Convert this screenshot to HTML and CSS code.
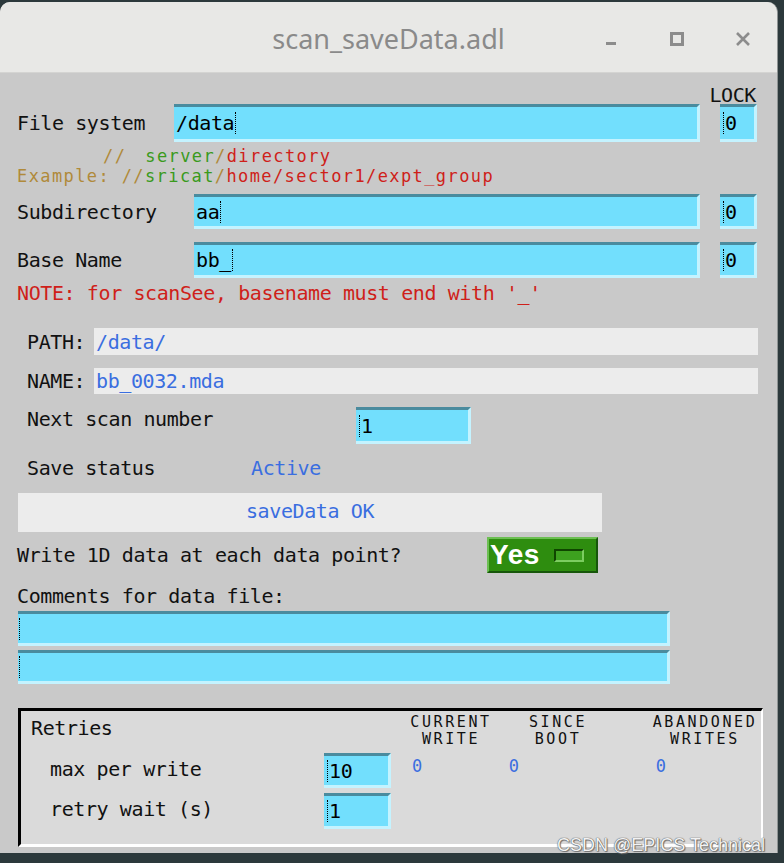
FILE: index.html
```html
<!DOCTYPE html>
<html>
<head>
    <meta name="viewport" content="width=device-width, initial-scale=1.0">
    <title>scan_saveData.adl</title>
    <link rel="stylesheet" href="styles.css">
</head>
<body>
    <div class="window">
        <div class="titlebar">
            <div></div>
            <div class="title">scan_saveData.adl</div>
            <div class="win-buttons">
                <svg width="14" height="16" viewBox="0 0 14 16"><rect x="1" y="11" width="10" height="3" fill="#8c8c8c"/></svg>
                <svg width="16" height="16" viewBox="0 0 16 16"><rect x="2.5" y="2.5" width="11" height="11" fill="none" stroke="#8c8c8c" stroke-width="3"/></svg>
                <svg width="16" height="16" viewBox="0 0 16 16"><path d="M2 2 L14 14 M14 2 L2 14" stroke="#8c8c8c" stroke-width="2.6"/></svg>
            </div>
        </div>

        <div class="content">
            <div class="lock-row"><span>LOCK</span></div>

            <div class="row row-fs">
                <div class="label lbl-fs">File system</div>
                <div class="field wide">/data<span class="cursor"></span></div>
                <div class="field lock"><span class="cursor"></span>0</div>
            </div>

            <div class="example">
                <div><span class="pad1"></span><span class="brown">//</span><span class="pad2"></span><span class="green">server</span><span class="brown">/</span><span class="red">directory</span></div>
                <div><span class="brown">Example: //</span><span class="green">sricat</span><span class="brown">/</span><span class="red">home/sector1/expt_group</span></div>
            </div>

            <div class="row row-sub">
                <div class="label lbl-sub">Subdirectory</div>
                <div class="field wide">aa<span class="cursor"></span></div>
                <div class="field lock"><span class="cursor"></span>0</div>
            </div>

            <div class="row row-base">
                <div class="label lbl-sub">Base Name</div>
                <div class="field wide">bb_<span class="cursor"></span></div>
                <div class="field lock"><span class="cursor"></span>0</div>
            </div>

            <div class="note">NOTE: for scanSee, basename must end with '_'</div>

            <div class="row row-path">
                <div class="label lbl-path">PATH:</div>
                <div class="readout">/data/</div>
            </div>

            <div class="row row-name">
                <div class="label lbl-path">NAME:</div>
                <div class="readout">bb_0032.mda</div>
            </div>

            <div class="row row-next">
                <div class="label lbl-next">Next scan number</div>
                <div class="field small"><span class="cursor"></span>1</div>
            </div>

            <div class="row row-status">
                <div class="label lbl-status">Save status</div>
                <div class="blue">Active</div>
            </div>

            <div class="message">saveData OK</div>

            <div class="row row-write">
                <div class="label lbl-write">Write 1D data at each data point?</div>
                <div class="yes-btn"><span>Yes</span><i class="indicator"></i></div>
            </div>

            <div class="comments-label">Comments for data file:</div>
            <div class="field comment"><span class="cursor"></span></div>
            <div class="field comment second"><span class="cursor"></span></div>

            <div class="retries">
                <div class="retries-head">
                    <div class="retries-title">Retries</div>
                    <div class="col-head h-current">CURRENT<br>WRITE</div>
                    <div class="col-head h-since">SINCE<br>BOOT</div>
                    <div class="col-head h-aband">ABANDONED<br>WRITES</div>
                </div>
                <div class="retry-row">
                    <div class="retry-label">max per write</div>
                    <div class="field retry-field"><span class="cursor"></span>10</div>
                    <div class="count c1">0</div>
                    <div class="count c2">0</div>
                    <div class="count c3">0</div>
                </div>
                <div class="retry-row second">
                    <div class="retry-label">retry wait (s)</div>
                    <div class="field retry-field"><span class="cursor"></span>1</div>
                </div>
            </div>
        </div>
    </div>
    <div class="watermark">CSDN @EPICS Technical</div>
</body>
</html>
```

FILE: styles.css
```css
body {
    margin: 0;
    width: 784px;
    height: 863px;
    overflow: hidden;
    background: #2c393c;
    font-family: 'DejaVu Sans Mono', 'Liberation Mono', monospace;
    font-size: 20px;
    letter-spacing: -0.4px;
    color: #111;
    position: relative;
}
.window {
    width: 777px;
    margin-top: 2px;
    background: #c9c9c9;
    border-radius: 10px 10px 0 0;
    border-right: 1px solid #8f9494;
}
.titlebar {
    height: 70px;
    background: #e8e8e6;
    border-radius: 10px 10px 0 0;
    border-bottom: 1px solid #d4d4d2;
    display: grid;
    grid-template-columns: 1fr auto 1fr;
    align-items: center;
}
.title {
    font-family: 'Noto Sans', 'DejaVu Sans', sans-serif;
    font-size: 27px;
    letter-spacing: 0;
    color: #8a8a8a;
    padding-top: 2px;
}
.win-buttons {
    display: flex;
    justify-content: flex-end;
    align-items: center;
    gap: 50px;
    padding-right: 26px;
    padding-top: 4px;
}
.content {
    padding: 0 0 6px 17px;
}
.lock-row {
    height: 31px;
    display: flex;
    justify-content: flex-end;
    align-items: flex-end;
    padding-right: 21px;
    line-height: 18px;
}
.row {
    display: flex;
    align-items: center;
}
.label {
    flex-shrink: 0;
}
.field {
    box-sizing: border-box;
    background: #72dffd;
    border-top: 3px solid #4a8b9e;
    border-bottom: 3px solid #c4f3ff;
    border-right: 3px solid #c4f3ff;
    display: flex;
    align-items: center;
    padding-left: 2px;
    color: #000;
}
.cursor {
    display: inline-block;
    width: 0;
    height: 22px;
    border-left: 1px dotted #000;
    margin: 0 1px;
}
.row-fs { height: 38px; }
.row-fs .field, .row-sub .field, .row-base .field { height: 100%; }
.lbl-fs { width: 157px; }
.lbl-sub { width: 177px; }
.wide { flex: 1; }
.lock {
    width: 37px;
    margin-left: 20px;
    margin-right: 20px;
    flex-shrink: 0;
}
.example {
    margin-top: 4px;
    font-size: 17px;
    letter-spacing: 1.4px;
    line-height: 20px;
}
.pad1 { display: inline-block; width: 86px; }
.pad2 { display: inline-block; width: 19px; }
.brown { color: #b08a3a; }
.green { color: #3a9a1c; }
.red { color: #cf1f1a; }
.blue { color: #3a6ee0; }
.row-sub { height: 35px; margin-top: 8px; }
.row-base { height: 36px; margin-top: 13px; }
.note {
    color: #cf1f1a;
    margin-top: 5px;
    line-height: 20px;
}
.row-path { height: 27px; margin-top: 25px; }
.row-name { height: 26px; margin-top: 13px; }
.lbl-path { width: 67px; padding-left: 10px; }
.readout {
    width: 664px;
    height: 100%;
    background: #ececec;
    color: #3a6ee0;
    display: flex;
    align-items: center;
    padding-left: 2px;
    box-sizing: border-box;
}
.row-next { height: 37px; margin-top: 13px; }
.lbl-next {
    width: 329px;
    padding-left: 10px;
    align-self: flex-start;
    line-height: 24px;
}
.small { width: 115px; height: 100%; }
.row-status { height: 28px; margin-top: 10px; }
.lbl-status { width: 224px; padding-left: 10px; }
.message {
    margin: 11px 0 0 1px;
    width: 584px;
    height: 39px;
    background: #ececec;
    color: #3a6ee0;
    display: flex;
    align-items: center;
    justify-content: center;
    padding-bottom: 3px;
    box-sizing: border-box;
}
.row-write { height: 36px; margin-top: 5px; }
.lbl-write { width: 470px; }
.yes-btn {
    box-sizing: border-box;
    width: 111px;
    height: 36px;
    background: #2e8d0f;
    border-top: 2px solid #6cbf52;
    border-left: 2px solid #6cbf52;
    border-bottom: 2px solid #17560a;
    border-right: 2px solid #17560a;
    display: flex;
    align-items: center;
}
.yes-btn span {
    font-family: 'Liberation Sans', Arial, sans-serif;
    font-weight: bold;
    font-size: 28px;
    letter-spacing: 0.5px;
    color: #fff;
    margin-left: 1px;
}
.indicator {
    box-sizing: border-box;
    width: 30px;
    height: 13px;
    margin-left: 14px;
    background: #3da11f;
    border-top: 2px solid #0f4500;
    border-left: 2px solid #0f4500;
    border-bottom: 2px solid #7ccd60;
    border-right: 2px solid #7ccd60;
}
.comments-label {
    margin-top: 12px;
    line-height: 22px;
}
.comment {
    width: 652px;
    height: 35px;
    margin: 4px 0 0 1px;
    padding-left: 0;
}
.comment.second { height: 34px; }
.retries {
    box-sizing: border-box;
    width: 745px;
    height: 139px;
    margin: 24px 0 0 1px;
    background: #dadada;
    border-top: 3px solid #000;
    border-left: 3px solid #000;
    border-bottom: 3px solid #fff;
    border-right: 2px solid #fff;
}
.retries-head {
    display: flex;
    height: 42px;
}
.retries-title {
    width: 388px;
    padding-left: 10px;
    box-sizing: border-box;
    padding-top: 6px;
    line-height: 22px;
}
.col-head {
    font-size: 15px;
    letter-spacing: 2.6px;
    line-height: 17px;
    padding-top: 3px;
    text-align: center;
    white-space: nowrap;
}
.h-current { width: 84px; margin-right: 34px; }
.h-since { width: 62px; margin-right: 62px; }
.h-aband { width: 108px; }
.retry-row {
    display: flex;
    height: 35px;
    align-items: center;
}
.retry-row.second { height: 36px; margin-top: 5px; }
.retry-label {
    width: 303px;
    padding-left: 29px;
    padding-bottom: 4px;
    box-sizing: border-box;
}
.retry-field {
    width: 67px;
    height: 100%;
}
.count {
    color: #3a6ee0;
    font-size: 17px;
    align-self: flex-start;
    padding-top: 3px;
}
.c1 { margin-left: 21px; }
.c2 { margin-left: 87px; }
.c3 { margin-left: 137px; }
.watermark {
    position: absolute;
    left: 557px;
    top: 835px;
    font-family: 'Liberation Sans', Arial, sans-serif;
    font-size: 18px;
    letter-spacing: 0;
    color: #f2f2f2;
    text-shadow: 0 0 1px #555, 0 0 1px #555, 1px 1px 1px #777;
}
```
